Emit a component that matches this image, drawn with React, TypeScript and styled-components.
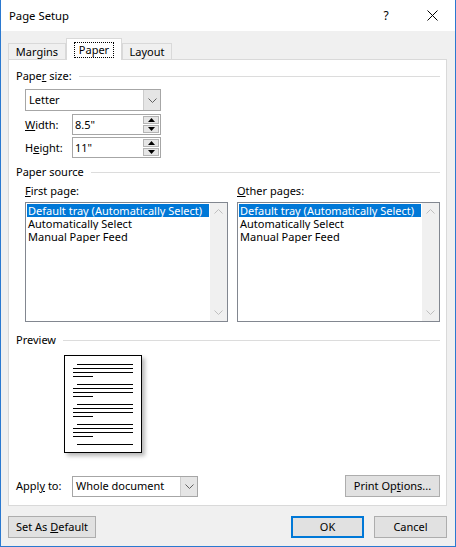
import styled, { createGlobalStyle } from "styled-components";

const GlobalStyle = createGlobalStyle`
  html, body {
    margin: 0;
    padding: 0;
    background: #ffffff;
  }
  body {
    font-family: "Noto Sans", "Liberation Sans", sans-serif;
    font-size: 11px;
    color: #000000;
  }
  * {
    box-sizing: border-box;
  }
`;

const Window = styled.div`
  width: 456px;
  height: 547px;
  display: flex;
  flex-direction: column;
  background: #f0f0f0;
  border: 1px solid #2b79d0;
  border-top: none;
`;

const TitleBar = styled.div`
  height: 31px;
  display: flex;
  align-items: center;
  background: #ffffff;
  padding-left: 8px;
`;

const Title = styled.div`
  flex: 1;
  font-size: 11.3px;
  line-height: 16px;
`;

const CaptionButton = styled.div`
  width: 46px;
  height: 31px;
  display: flex;
  align-items: center;
  justify-content: center;
  font-size: 12px;
`;

const Body = styled.div`
  flex: 1;
  display: flex;
  flex-direction: column;
  padding: 7px 7px 0 7px;
`;

const TabStrip = styled.div`
  height: 21px;
  display: flex;
  align-items: flex-end;
`;

const Tab = styled.div<{ $active?: boolean; $width: number }>`
  width: ${(p) => p.$width}px;
  height: ${(p) => (p.$active ? 22 : 16)}px;
  margin-bottom: ${(p) => (p.$active ? -1 : 0)}px;
  position: relative;
  z-index: ${(p) => (p.$active ? 1 : 0)};
  display: flex;
  align-items: center;
  justify-content: center;
  background: ${(p) => (p.$active ? "#ffffff" : "#f0f0f0")};
  border: 1px solid #d9d9d9;
  border-bottom: none;
  line-height: 14px;
  padding-top: ${(p) => (p.$active ? 0 : 1)}px;
`;

const FocusText = styled.span`
  outline: 1px dotted #000000;
  padding: 0 4px;
  line-height: 14px;
`;

const Panel = styled.div`
  width: 439px;
  height: 447px;
  background: #ffffff;
  border: 1px solid #d9d9d9;
  padding: 0 6px 0 7px;
  display: flex;
  flex-direction: column;
`;

const SectionHeader = styled.div<{ $top: number }>`
  margin-top: ${(p) => p.$top}px;
  height: 14px;
  line-height: 14px;
  display: flex;
  align-items: center;
`;

const Rule = styled.div`
  flex: 1;
  height: 1px;
  margin-left: 7px;
  background: #dcdcdc;
`;

const Indent = styled.div`
  margin-left: 9px;
  display: flex;
  flex-direction: column;
`;

const FieldRow = styled.div<{ $top: number }>`
  margin-top: ${(p) => p.$top}px;
  display: flex;
  align-items: center;
`;

const FieldLabel = styled.div<{ $width: number }>`
  width: ${(p) => p.$width}px;
  line-height: 14px;
`;

const Combo = styled.div<{ $width: number; $height: number }>`
  width: ${(p) => p.$width}px;
  height: ${(p) => p.$height}px;
  display: flex;
  background: #ffffff;
  border: 1px solid #a6a6a6;
`;

const ComboText = styled.div`
  flex: 1;
  padding-left: 3px;
  display: flex;
  align-items: center;
  line-height: 14px;
`;

const ComboArrow = styled.div`
  width: 17px;
  display: flex;
  align-items: center;
  justify-content: center;
  background: #e5e5e5;
  border-left: 1px solid #cccccc;
`;

const SpinBox = styled.div`
  width: 89px;
  height: 21px;
  display: flex;
  background: #ffffff;
  border: 1px solid #a6a6a6;
`;

const SpinText = styled.div`
  flex: 1;
  padding-left: 2px;
  display: flex;
  align-items: center;
  line-height: 14px;
`;

const SpinButtons = styled.div`
  width: 16px;
  margin: 1px;
  display: flex;
  flex-direction: column;
  gap: 1px;
`;

const SpinButton = styled.div`
  flex: 1;
  display: flex;
  align-items: center;
  justify-content: center;
  background: #e6e6e6;
  border: 1px solid #b4b4b4;
`;

const SourceGrid = styled.div`
  display: grid;
  grid-template-columns: 203px 203px;
  column-gap: 9px;
`;

const SourceColumn = styled.div`
  display: flex;
  flex-direction: column;
`;

const ColumnLabel = styled.div`
  margin-top: 5px;
  line-height: 14px;
`;

const ListBox = styled.div`
  margin-top: 4px;
  height: 120px;
  display: flex;
  border: 1px solid #828790;
  background: #ffffff;
`;

const ListItems = styled.div`
  flex: 1;
  padding: 1px;
  display: flex;
  flex-direction: column;
`;

const ListItem = styled.div<{ $selected?: boolean }>`
  height: 13px;
  line-height: 13px;
  padding-left: 1px;
  white-space: nowrap;
  overflow: hidden;
  background: ${(p) => (p.$selected ? "#0078d7" : "transparent")};
  color: ${(p) => (p.$selected ? "#ffffff" : "#000000")};
`;

const ScrollTrack = styled.div`
  width: 17px;
  display: flex;
  flex-direction: column;
  justify-content: space-between;
  align-items: center;
  padding: 6px 0;
  background: #f0f0f0;
`;

const PreviewPage = styled.div`
  margin-top: 8px;
  margin-left: 48px;
  width: 78px;
  height: 98px;
  background: #ffffff;
  border: 1px solid #000000;
  box-shadow: 3px 3px 4px rgba(0, 0, 0, 0.28);
`;

const ApplyRow = styled.div`
  margin-top: 22px;
  height: 22px;
  display: flex;
  align-items: center;
`;

const Spacer = styled.div`
  flex: 1;
`;

const Button = styled.div<{ $width: number; $default?: boolean }>`
  width: ${(p) => p.$width}px;
  height: 22px;
  display: flex;
  align-items: center;
  justify-content: center;
  background: #e1e1e1;
  border: ${(p) => (p.$default ? "2px solid #0078d7" : "1px solid #adadad")};
  line-height: 14px;
  white-space: pre;
`;

const Footer = styled.div`
  margin-top: 10px;
  display: flex;
  gap: 10px;
  padding-right: 1px;
`;

const Chevron = ({ color = "#606060" }: { color?: string }) => (
  <svg width="9" height="5" viewBox="0 0 9 5">
    <path d="M0.5 0.5 L4.5 4.5 L8.5 0.5" fill="none" stroke={color} strokeWidth="1" />
  </svg>
);

const ChevronUp = ({ color = "#bfbfbf" }: { color?: string }) => (
  <svg width="9" height="5" viewBox="0 0 9 5">
    <path d="M0.5 4.5 L4.5 0.5 L8.5 4.5" fill="none" stroke={color} strokeWidth="1" />
  </svg>
);

const Triangle = ({ up }: { up?: boolean }) => (
  <svg width="7" height="4" viewBox="0 0 7 4">
    <path d={up ? "M0 4 L3.5 0 L7 4 Z" : "M0 0 L3.5 4 L7 0 Z"} fill="#000000" />
  </svg>
);

const trayOptions = ["Default tray (Automatically Select)", "Automatically Select", "Manual Paper Feed"];

function SourceList() {
  return (
    <ListBox>
      <ListItems>
        {trayOptions.map((t, i) => (
          <ListItem key={t} $selected={i === 0}>
            {t}
          </ListItem>
        ))}
      </ListItems>
      <ScrollTrack>
        <ChevronUp />
        <Chevron color="#bfbfbf" />
      </ScrollTrack>
    </ListBox>
  );
}

function Spinner({ value }: { value: string }) {
  return (
    <SpinBox>
      <SpinText>{value}</SpinText>
      <SpinButtons>
        <SpinButton>
          <Triangle up />
        </SpinButton>
        <SpinButton>
          <Triangle />
        </SpinButton>
      </SpinButtons>
    </SpinBox>
  );
}

// preview lines: groups of 4 (indented, full, full, short), then one indented line
const previewLines = (() => {
  const lines: { x1: number; x2: number; y: number }[] = [];
  for (let g = 0; g < 4; g++) {
    const y = 8.5 + g * 20;
    lines.push({ x1: 12, x2: 68, y });
    lines.push({ x1: 8, x2: 68, y: y + 4 });
    lines.push({ x1: 8, x2: 68, y: y + 8 });
    lines.push({ x1: 8, x2: 28, y: y + 12 });
  }
  lines.push({ x1: 12, x2: 68, y: 88.5 });
  return lines;
})();

export default function App() {
  return (
    <>
      <GlobalStyle />
      <Window>
        <TitleBar>
          <Title>Page Setup</Title>
          <CaptionButton>?</CaptionButton>
          <CaptionButton>
            <svg width="11" height="11" viewBox="0 0 11 11">
              <path d="M0.5 0.5 L10.5 10.5 M10.5 0.5 L0.5 10.5" stroke="#000" strokeWidth="1" />
            </svg>
          </CaptionButton>
        </TitleBar>
        <Body>
          <TabStrip>
            <Tab $width={58}>Margins</Tab>
            <Tab $width={56} $active>
              <FocusText>Paper</FocusText>
            </Tab>
            <Tab $width={50}>Layout</Tab>
          </TabStrip>
          <Panel>
            <SectionHeader $top={9}>
              <span>
                Pape<u>r</u> size:
              </span>
              <Rule />
            </SectionHeader>
            <Indent>
              <FieldRow $top={6}>
                <Combo $width={136} $height={22}>
                  <ComboText>Letter</ComboText>
                  <ComboArrow>
                    <Chevron />
                  </ComboArrow>
                </Combo>
              </FieldRow>
              <FieldRow $top={3}>
                <FieldLabel $width={47}>
                  <u>W</u>idth:
                </FieldLabel>
                <Spinner value={'8.5"'} />
              </FieldRow>
              <FieldRow $top={2}>
                <FieldLabel $width={47}>
                  H<u>e</u>ight:
                </FieldLabel>
                <Spinner value={'11"'} />
              </FieldRow>
            </Indent>
            <SectionHeader $top={7}>
              <span>Paper source</span>
              <Rule />
            </SectionHeader>
            <Indent>
              <SourceGrid>
                <SourceColumn>
                  <ColumnLabel>
                    <u>F</u>irst page:
                  </ColumnLabel>
                  <SourceList />
                </SourceColumn>
                <SourceColumn>
                  <ColumnLabel>
                    <u>O</u>ther pages:
                  </ColumnLabel>
                  <SourceList />
                </SourceColumn>
              </SourceGrid>
            </Indent>
            <SectionHeader $top={11}>
              <span>Preview</span>
              <Rule />
            </SectionHeader>
            <PreviewPage>
              <svg width="76" height="96" viewBox="0 0 76 96">
                {previewLines.map((l, i) => (
                  <line key={i} x1={l.x1} x2={l.x2} y1={l.y} y2={l.y} stroke="#000" strokeWidth="1" />
                ))}
              </svg>
            </PreviewPage>
            <ApplyRow>
              <FieldLabel $width={56}>
                Appl<u>y</u> to:
              </FieldLabel>
              <Combo $width={126} $height={21}>
                <ComboText>Whole document</ComboText>
                <ComboArrow>
                  <Chevron />
                </ComboArrow>
              </Combo>
              <Spacer />
              <Button $width={95}>
                <span>
                  Print Op<u>t</u>ions...
                </span>
              </Button>
            </ApplyRow>
          </Panel>
          <Footer>
            <Button $width={88}>
              <span>
                Set As <u>D</u>efault
              </span>
            </Button>
            <Spacer />
            <Button $width={73} $default>
              OK
            </Button>
            <Button $width={73}>Cancel</Button>
          </Footer>
        </Body>
      </Window>
    </>
  );
}
